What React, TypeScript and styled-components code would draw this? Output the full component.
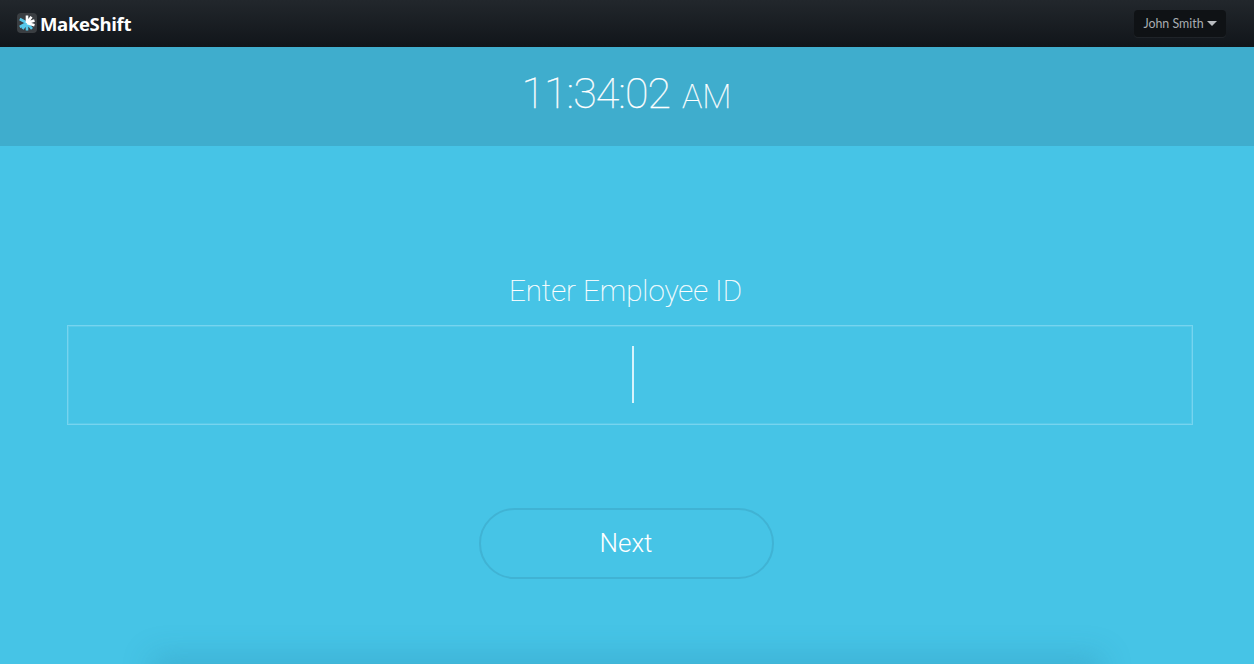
import React from "react";
import styled, { createGlobalStyle } from "styled-components";

const Global = createGlobalStyle`
  html, body { margin: 0; padding: 0; height: 100%; }
  body { background: #46c4e6; font-family: Roboto, "Liberation Sans", sans-serif; overflow: hidden; }
  #root { height: 100%; }
`;

const Page = styled.div`
  width: 1254px;
  height: 664px;
  display: flex;
  flex-direction: column;
  position: relative;
  overflow: hidden;
  background: #46c4e6;
`;

const NavBar = styled.header`
  height: 47px;
  flex: none;
  display: flex;
  align-items: center;
  justify-content: space-between;
  padding: 0 28px 0 17px;
  box-sizing: border-box;
  background: linear-gradient(#22272c, #11151a);
`;

const Brand = styled.div`
  display: flex;
  align-items: center;
  gap: 3px;
  margin-top: -1px;
  color: #fff;
  font: 700 18.5px "Open Sans", sans-serif;
  letter-spacing: -0.35px;
`;

const LogoBox = styled.svg`
  width: 20px;
  height: 20px;
  display: block;
`;

const UserButton = styled.button`
  width: 92px;
  height: 27px;
  margin-top: -1px;
  padding: 0;
  display: flex;
  align-items: center;
  justify-content: center;
  gap: 3px;
  border: 0;
  border-radius: 4px;
  background: #0f1215;
  box-shadow: 0 1px 0 rgba(255, 255, 255, 0.05);
  color: #a9adb1;
  font: 400 12.4px Lato, sans-serif;
`;

const Caret = styled.span`
  width: 0;
  height: 0;
  border-left: 5px solid transparent;
  border-right: 5px solid transparent;
  border-top: 5px solid #b9bcbf;
`;

const ClockBand = styled.div`
  height: 99px;
  flex: none;
  display: flex;
  align-items: center;
  justify-content: center;
  box-sizing: border-box;
  padding-bottom: 6px;
  padding-right: 1px;
  background: #3fadcd;
  color: #fff;
  font-weight: 100;
  -webkit-text-stroke: 0.25px #fff;
`;

const Time = styled.span`
  font-size: 43px;
  line-height: 1;
  letter-spacing: -1px;
`;

const Meridiem = styled.span`
  font-size: 34px;
  line-height: 1;
  margin-left: 12px;
  padding-top: 5px;
`;

const Main = styled.main`
  flex: 1;
  display: flex;
  flex-direction: column;
  align-items: center;
  padding-top: 127px;
`;

const Title = styled.h1`
  margin: 0 0 0 -3px;
  color: #fff;
  font-size: 29.5px;
  font-weight: 100;
  line-height: 36px;
  -webkit-text-stroke: 0.2px #fff;
`;

const InputBox = styled.div`
  width: 1126px;
  height: 100px;
  margin-top: 16px;
  margin-left: 6px;
  box-sizing: border-box;
  display: flex;
  align-items: center;
  justify-content: center;
  border: 1px solid #76d4ef;
  box-shadow: inset 0 0 0 1px #58cae9;
`;

const Cursor = styled.span`
  width: 2px;
  height: 57px;
  margin-left: 6px;
  margin-top: -2px;
  background: #d7f3fb;
`;

const NextButton = styled.button`
  width: 295px;
  height: 71px;
  margin-top: 83px;
  margin-left: -2px;
  padding: 0 0 2px;
  box-sizing: border-box;
  border: 2px solid #40b3d4;
  border-radius: 36px;
  background: transparent;
  color: #fff;
  font-family: Roboto, sans-serif;
  font-size: 26px;
  font-weight: 300;
`;

const BottomShadow = styled.div`
  position: absolute;
  left: 160px;
  right: 160px;
  bottom: -18px;
  height: 14px;
  box-shadow: 0 -4px 30px 8px rgba(40, 130, 165, 0.3);
`;

export default function App() {
  return (
    <Page>
      <Global />
      <NavBar>
        <Brand>
          <LogoBox viewBox="0 0 20 20">
            <rect width="20" height="20" rx="4" fill="#3a3e42" />
            <g stroke="#57c8ea" strokeWidth="2.6">
              <path d="M10 10V17.5M10 10L2.8 6M10 10L2.8 14M10 10L15 15.8M10 10L5.5 16" />
            </g>
            <g stroke="#fff" strokeWidth="2.6">
              <path d="M10 10V2.5M10 10L14.5 3.8M10 10L17.5 7.5M10 10L17.5 12.2" />
            </g>
          </LogoBox>
          MakeShift
        </Brand>
        <UserButton>
          John Smith
          <Caret />
        </UserButton>
      </NavBar>
      <ClockBand>
        <Time>11:34:02</Time>
        <Meridiem>AM</Meridiem>
      </ClockBand>
      <Main>
        <Title>Enter Employee ID</Title>
        <InputBox>
          <Cursor />
        </InputBox>
        <NextButton>Next</NextButton>
      </Main>
      <BottomShadow />
    </Page>
  );
}
